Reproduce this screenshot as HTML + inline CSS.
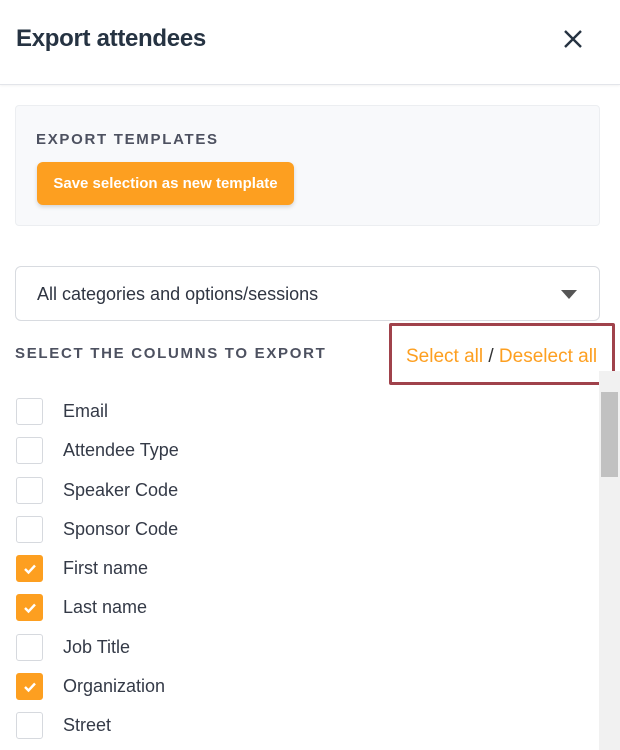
<!DOCTYPE html>
<html><head><meta charset="utf-8"><style>
*{box-sizing:border-box;margin:0;padding:0}
body{width:620px;height:750px;overflow:hidden;background:#fff;font-family:"Liberation Sans",sans-serif;color:#2f3542;position:relative}
.hdr{position:absolute;left:0;top:0;width:620px;height:85px;border-bottom:1px solid #e3e5ea;box-shadow:0 1px 2px rgba(0,0,0,.05)}
.title{position:absolute;left:16px;top:25px;font-size:24px;font-weight:bold;color:#263342;letter-spacing:-0.3px}
.tpl{position:absolute;left:15px;top:105px;width:585px;height:121px;background:#f8f9fb;border:1px solid #eceef1;border-radius:4px}
.lbl{font-size:15px;font-weight:bold;letter-spacing:1.7px;color:#4d5160}
.btn{position:absolute;left:21px;top:56px;width:257px;height:43px;background:#fd9f20;border-radius:6px;color:#fff;font-size:15px;font-weight:bold;line-height:43px;text-align:center;box-shadow:0 2px 4px rgba(0,0,0,.15)}
.sel{position:absolute;left:15px;top:266px;width:585px;height:55px;border:1px solid #d8dbe0;border-radius:6px;font-size:18px;line-height:55px;padding-left:21px;color:#2f3542}
.tri{position:absolute;right:22px;top:23px;width:0;height:0;border-left:8px solid transparent;border-right:8px solid transparent;border-top:9px solid #555}
.red{position:absolute;left:389px;top:323px;width:226px;height:62px;border:3px solid #a0424b;border-radius:2px}
.links{position:absolute;left:406px;top:346px;font-size:19px;color:#fd9f20}
.track{position:absolute;left:599px;top:371px;width:21px;height:379px;background:#f1f1f1}
.thumb{position:absolute;left:601px;top:392px;width:17px;height:85px;background:#c1c1c1}
.row{position:absolute;left:16px;height:26px;font-size:18px}
.cb{position:absolute;left:0;top:0;width:27px;height:27px;border:1px solid #d6d9de;border-radius:3px;background:#fff}
.cb.on{background:#fd9f20;border-color:#fd9f20}
.cb.on svg{position:absolute;left:6px;top:7px}
.row span{position:absolute;left:47px;top:3px;white-space:nowrap;color:#343a47}
</style></head><body>
<div class="hdr"><div class="title">Export attendees</div>
<svg style="position:absolute;left:563px;top:29px" width="20" height="20" viewBox="0 0 20 20"><path d="M2 2L18 18M18 2L2 18" stroke="#263342" stroke-width="2.4"/></svg></div>
<div class="tpl"><div class="lbl" style="position:absolute;left:20px;top:25px">EXPORT TEMPLATES</div><div class="btn">Save selection as new template</div></div>
<div class="sel">All categories and options/sessions<div class="tri"></div></div>
<div class="lbl" style="position:absolute;left:15px;top:345px">SELECT THE COLUMNS TO EXPORT</div>
<div class="red"></div>
<div class="links">Select all <span style="color:#333">/</span> Deselect all</div>
<div class="track"></div><div class="thumb"></div>
<div class="row" style="top:398px"><div class="cb"></div><span>Email</span></div>
<div class="row" style="top:437px"><div class="cb"></div><span>Attendee Type</span></div>
<div class="row" style="top:477px"><div class="cb"></div><span>Speaker Code</span></div>
<div class="row" style="top:516px"><div class="cb"></div><span>Sponsor Code</span></div>
<div class="row" style="top:555px"><div class="cb on"><svg width="14" height="12" viewBox="0 0 14 12"><path d="M2 6L5.5 9.5L12 2.5" fill="none" stroke="#fff" stroke-width="2.4"/></svg></div><span>First name</span></div>
<div class="row" style="top:594px"><div class="cb on"><svg width="14" height="12" viewBox="0 0 14 12"><path d="M2 6L5.5 9.5L12 2.5" fill="none" stroke="#fff" stroke-width="2.4"/></svg></div><span>Last name</span></div>
<div class="row" style="top:634px"><div class="cb"></div><span>Job Title</span></div>
<div class="row" style="top:673px"><div class="cb on"><svg width="14" height="12" viewBox="0 0 14 12"><path d="M2 6L5.5 9.5L12 2.5" fill="none" stroke="#fff" stroke-width="2.4"/></svg></div><span>Organization</span></div>
<div class="row" style="top:712px"><div class="cb"></div><span>Street</span></div>
</body></html>
